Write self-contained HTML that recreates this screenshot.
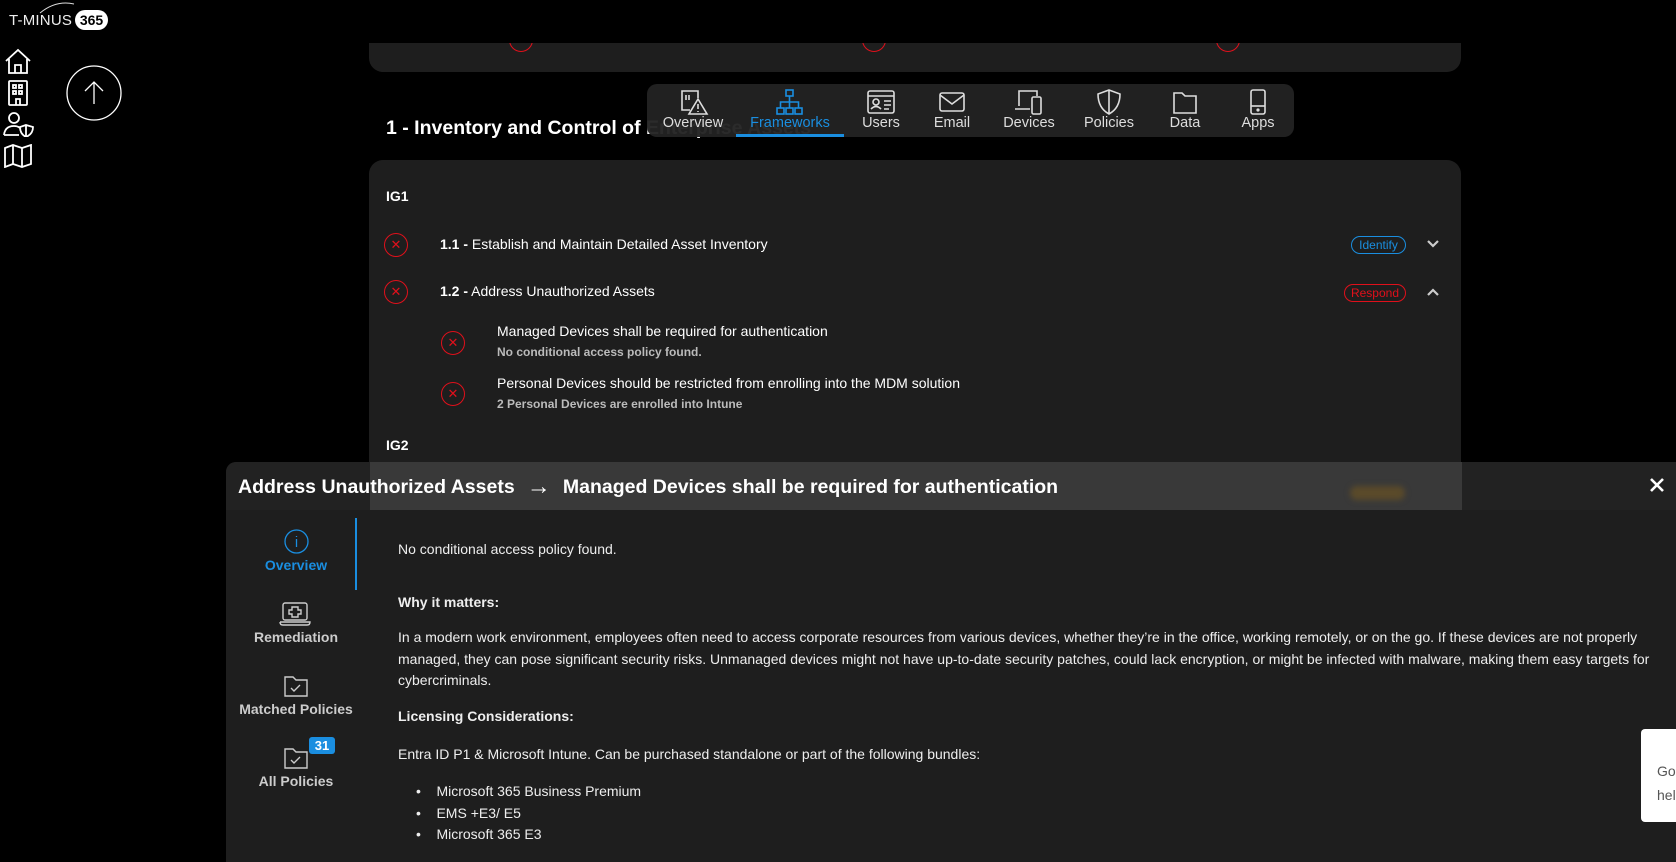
<!DOCTYPE html>
<html><head><meta charset="utf-8"><style>
*{margin:0;padding:0;box-sizing:border-box}
body{width:1676px;height:843px;background:#000;overflow:hidden;position:relative;font-family:"Liberation Sans",Arial,sans-serif;color:#fff}
.abs{position:absolute}
.card{background:#1e1e1e;border-radius:14px}
.xc{position:absolute;width:24px;height:24px;border:1.5px solid #e0101b;border-radius:50%;color:#e0101b;font-size:13px;line-height:21px;text-align:center}
.nav{position:absolute;top:84px;left:647px;width:647px;height:53px;background:rgba(34,34,34,.96);border-radius:10px}
.ni{position:absolute;top:0;width:100px;margin-left:-50px;text-align:center;font-size:14.5px;color:#ddd}
.ni svg{display:block;margin:4px auto 0;}
.ni span{display:block;margin-top:-1px}
.sb{position:absolute;left:231px;width:130px;text-align:center;font-size:14px;font-weight:bold;color:#ccc}
.p{position:absolute;left:398px;font-size:14px;color:#eee;line-height:21.5px;white-space:nowrap}
</style></head><body>
<div class="abs" style="left:9px;top:12px;font-size:15px;color:#eee;letter-spacing:.2px">T-MINUS</div>
<div class="abs" style="left:75px;top:10px;width:33px;height:20px;background:#fff;border-radius:10px;color:#000;font-weight:bold;font-size:14px;text-align:center;line-height:20px">365</div>
<svg class="abs" style="left:38px;top:0" width="40" height="14"><path d="M2 13 Q18 0 36 4" stroke="#ddd" fill="none" stroke-width="1"/></svg>
<svg class="abs" style="left:4px;top:48px" width="28" height="28" fill="none" stroke="#fff" stroke-width="1.8"><path d="M2 13 L14 2 L26 13 M5 11 V25 H23 V11 M11 25 V17 H17 V25"/></svg>
<svg class="abs" style="left:6px;top:80px" width="24" height="26" fill="none" stroke="#fff" stroke-width="1.8"><rect x="3" y="1" width="18" height="24" rx="1"/><rect x="7" y="5" width="3" height="3"/><rect x="13" y="5" width="3" height="3"/><rect x="7" y="11" width="3" height="3"/><rect x="13" y="11" width="3" height="3"/><path d="M10 25 V19 H14 V25"/></svg>
<svg class="abs" style="left:2px;top:111px" width="32" height="26" fill="none" stroke="#fff" stroke-width="1.8"><circle cx="12" cy="7" r="5"/><path d="M2 24 Q3 15 12 15 Q16 15 18 17 M2 24 H17"/><path d="M24 14 L31 16 Q31 23 24 26 Q18 23 18 16 Z M24 14 V26"/></svg>
<svg class="abs" style="left:3px;top:144px" width="30" height="24" fill="none" stroke="#fff" stroke-width="1.8"><path d="M2 4 L10 1 L19 4 L28 1 V20 L19 23 L10 20 L2 23 Z M10 1 V20 M19 4 V23"/></svg>
<svg class="abs" style="left:65px;top:64px" width="58" height="58" fill="none" stroke="#fff" stroke-width="1.3"><circle cx="29" cy="29" r="27"/><path d="M29 40 V18 M20 27 L29 18 L38 27"/></svg>

<div class="card abs" style="left:369px;top:-20px;width:1092px;height:92px"></div>
<div class="xc" style="left:509px;top:28px"></div>
<div class="xc" style="left:862px;top:28px"></div>
<div class="xc" style="left:1216px;top:28px"></div>
<div class="abs" style="left:130px;top:0;width:1400px;height:43px;background:#000"></div>

<div class="abs" style="left:386px;top:117px;font-size:19.5px;font-weight:bold">1 - Inventory and Control of Enterprise Assets</div>

<div class="card abs" style="left:369px;top:160px;width:1092px;height:400px"></div>
<div class="abs" style="left:386px;top:188px;font-size:14px;font-weight:bold">IG1</div>
<div class="xc" style="left:384px;top:233px">✕</div>
<div class="abs" style="left:440px;top:236px;font-size:14px"><b>1.1 -</b> Establish and Maintain Detailed Asset Inventory</div>
<div class="xc" style="left:384px;top:280px">✕</div>
<div class="abs" style="left:440px;top:283px;font-size:14px"><b>1.2 -</b> Address Unauthorized Assets</div>
<div class="xc" style="left:441px;top:331px">✕</div>
<div class="abs" style="left:497px;top:323px;font-size:14px">Managed Devices shall be required for authentication</div>
<div class="abs" style="left:497px;top:345px;font-size:12px;color:#bbb;font-weight:bold">No conditional access policy found.</div>
<div class="xc" style="left:441px;top:382px">✕</div>
<div class="abs" style="left:497px;top:375px;font-size:14px">Personal Devices should be restricted from enrolling into the MDM solution</div>
<div class="abs" style="left:497px;top:397px;font-size:12px;color:#bbb;font-weight:bold">2 Personal Devices are enrolled into Intune</div>
<div class="abs" style="left:386px;top:437px;font-size:14px;font-weight:bold">IG2</div>
<div class="abs" style="left:1351px;top:236px;width:55px;height:18px;border:1.3px solid #1a8ee0;border-radius:9px;color:#1a8ee0;font-size:12px;text-align:center;line-height:16px">Identify</div>
<div class="abs" style="left:1344px;top:284px;width:62px;height:18px;border:1.3px solid #e0101b;border-radius:9px;color:#e0101b;font-size:12px;text-align:center;line-height:16px">Respond</div>
<svg class="abs" style="left:1425px;top:238px" width="16" height="12" fill="none" stroke="#ccc" stroke-width="2.2"><path d="M3 3 L8 8 L13 3"/></svg>
<svg class="abs" style="left:1425px;top:286px" width="16" height="12" fill="none" stroke="#ccc" stroke-width="2.2"><path d="M3 9 L8 4 L13 9"/></svg>

<div class="nav">
<div class="ni" style="left:46px"><svg width="34" height="28" fill="none" stroke="#ddd" stroke-width="1.6"><path d="M14 22 H6 V3 H22 V10"/><path d="M10 7 V12 M13 7 V12"/><path d="M22 11 L31 26 H13 Z M22 16 V21 M22 23 V24"/></svg><span>Overview</span></div>
<div class="ni" style="left:143px;color:#1a8ee0"><svg width="34" height="28" fill="none" stroke="#1a8ee0" stroke-width="1.6"><rect x="13" y="2" width="7" height="6"/><rect x="4" y="20" width="7" height="6"/><rect x="13" y="20" width="7" height="6"/><rect x="22" y="20" width="7" height="6"/><path d="M16.5 8 V14 M7.5 20 V14 H25.5 V20 M16.5 14 V20"/></svg><span>Frameworks</span></div>
<div class="abs" style="left:89px;top:50px;width:108px;height:3px;background:#1a8ee0"></div>
<div class="ni" style="left:234px"><svg width="34" height="28" fill="none" stroke="#ddd" stroke-width="1.6"><rect x="4" y="3" width="26" height="22" rx="2"/><path d="M4 8 H30"/><circle cx="12" cy="14" r="3"/><path d="M7 21 Q12 16 17 21 M20 13 H27 M20 17 H27 M20 21 H25"/></svg><span>Users</span></div>
<div class="ni" style="left:305px"><svg width="34" height="28" fill="none" stroke="#ddd" stroke-width="1.6"><rect x="5" y="5" width="24" height="18" rx="2"/><path d="M5 7 L17 16 L29 7"/></svg><span>Email</span></div>
<div class="ni" style="left:382px"><svg width="34" height="28" fill="none" stroke="#ddd" stroke-width="1.6"><path d="M7 18 V3 H25 V8 M3 21 H18"/><rect x="20" y="9" width="9" height="17" rx="1.5"/></svg><span>Devices</span></div>
<div class="ni" style="left:462px"><svg width="34" height="28" fill="none" stroke="#ddd" stroke-width="1.6"><path d="M17 2 L28 6 Q28 20 17 26 Q6 20 6 6 Z M17 2 V26"/></svg><span>Policies</span></div>
<div class="ni" style="left:538px"><svg width="34" height="28" fill="none" stroke="#ddd" stroke-width="1.6"><path d="M6 5 H14 L17 8 H28 V25 H6 Z"/></svg><span>Data</span></div>
<div class="ni" style="left:611px"><svg width="34" height="28" fill="none" stroke="#ddd" stroke-width="1.6"><rect x="10" y="2" width="14" height="24" rx="2"/><path d="M10 18 H24"/><circle cx="17" cy="22" r=".8" fill="#ddd"/></svg><span>Apps</span></div>
</div>

<div class="abs" style="left:226px;top:462px;width:1450px;height:400px;background:#1e1e1e;border-radius:10px 0 0 0"></div>
<div class="abs" style="left:226px;top:462px;width:1450px;height:48px;background:#222;border-radius:10px 0 0 0"></div>
<div class="abs" style="left:370px;top:462px;width:1092px;height:48px;background:#393939"></div>
<div class="abs" style="left:1350px;top:486px;width:55px;height:14px;background:#5a4a2a;border-radius:7px;filter:blur(3px)"></div>
<div class="abs" style="left:238px;top:472px;font-size:19.5px;font-weight:bold;color:#fff">Address Unauthorized Assets <span style="font-size:24px;font-weight:normal;position:relative;top:1px">&nbsp;→&nbsp;</span> Managed Devices shall be required for authentication</div>
<svg class="abs" style="left:1649px;top:477px" width="16" height="16" stroke="#fff" stroke-width="2.6"><path d="M2 2 L14 14 M14 2 L2 14"/></svg>

<div class="abs" style="left:355px;top:518px;width:2px;height:72px;background:#1a8ee0"></div>
<svg class="abs" style="left:284px;top:529px" width="25" height="25" fill="none" stroke="#1a8ee0" stroke-width="1.3"><circle cx="12.5" cy="12.5" r="11.5"/><path d="M12.5 10 V18 M12.5 7 V8"/></svg>
<div class="sb" style="top:557px;color:#1a8ee0">Overview</div>
<svg class="abs" style="left:279px;top:602px" width="34" height="24" fill="none" stroke="#ccc" stroke-width="1.4"><rect x="4" y="1" width="24" height="17" rx="2"/><path d="M1 20 H31 Q31 23 28 23 H4 Q1 23 1 20 M13 5 H19 V8 H22 V12 H19 V15 H13 V12 H10 V8 H13 Z"/></svg>
<div class="sb" style="top:629px">Remediation</div>
<svg class="abs" style="left:283px;top:674px" width="26" height="24" fill="none" stroke="#ccc" stroke-width="1.4"><path d="M2 3 H10 L13 6 H24 V22 H2 Z M8 14 L11 17 L17 11"/></svg>
<div class="sb" style="top:701px">Matched Policies</div>
<svg class="abs" style="left:283px;top:746px" width="26" height="24" fill="none" stroke="#ccc" stroke-width="1.4"><path d="M2 3 H10 L13 6 H24 V22 H2 Z M8 14 L11 17 L17 11"/></svg>
<div class="abs" style="left:309px;top:737px;width:26px;height:17px;background:#1a8ee0;border-radius:3px;font-size:13px;font-weight:bold;text-align:center;line-height:17px">31</div>
<div class="sb" style="top:773px">All Policies</div>

<div class="p" style="top:539px">No conditional access policy found.</div>
<div class="p" style="top:592px;font-weight:bold">Why it matters:</div>
<div class="p" style="top:627px">In a modern work environment, employees often need to access corporate resources from various devices, whether they’re in the office, working remotely, or on the go. If these devices are not properly<br>managed, they can pose significant security risks. Unmanaged devices might not have up-to-date security patches, could lack encryption, or might be infected with malware, making them easy targets for<br>cybercriminals.</div>
<div class="p" style="top:706px;font-weight:bold">Licensing Considerations:</div>
<div class="p" style="top:744px">Entra ID P1 &amp; Microsoft Intune. Can be purchased standalone or part of the following bundles:</div>
<div class="p" style="top:781px;left:416px">•&nbsp;&nbsp;&nbsp; Microsoft 365 Business Premium<br>•&nbsp;&nbsp;&nbsp; EMS +E3/ E5<br>•&nbsp;&nbsp;&nbsp; Microsoft 365 E3</div>

<div class="abs" style="left:1641px;top:729px;width:50px;height:93px;background:#fff;border-radius:4px;color:#555;font-size:14px;line-height:24px;padding:30px 0 0 16px">Go<br>hel</div>
</body></html>
